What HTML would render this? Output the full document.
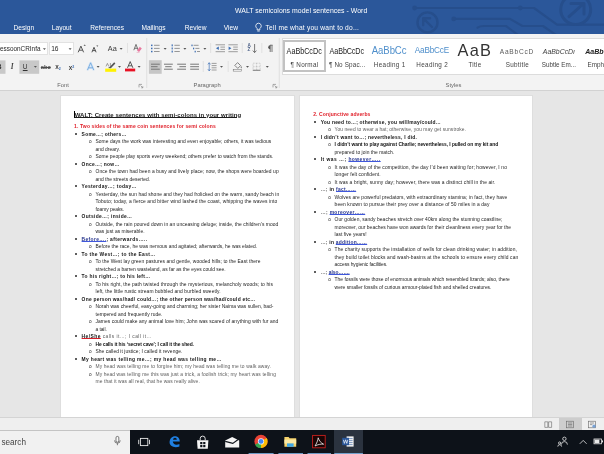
<!DOCTYPE html>
<html lang="en">
<head>
<meta charset="utf-8">
<title>WALT semicolons model sentences - Word</title>
<style>
html,body{margin:0;padding:0}
body{width:604px;height:454px;overflow:hidden;position:relative;background:#e6e6e6;font-family:"Liberation Sans",sans-serif;}
.abs{position:absolute}
#tb{position:absolute;left:0;top:0;width:604px;height:34px;background:#2b579a;overflow:hidden}
#tb span{position:absolute;color:#fff;white-space:nowrap;line-height:8px}
.tab{font-size:6.6px;top:23.600px;color:#fff!important}
#rb{position:absolute;left:0;top:34px;width:604px;height:56px;background:#f3f3f3;border-bottom:0.7px solid #d2d2d2;overflow:hidden}
#rb span{position:absolute;white-space:nowrap;color:#444;line-height:8px}
.gl{font-size:5.8px;color:#666!important;top:46.6px}
#doc{position:absolute;left:0;top:91px;width:604px;height:326px;background:#e6e6e6;overflow:hidden}
.pg{position:absolute;top:96px;height:321px;background:#fff;box-shadow:0 0 0 1px #dedede}
.l{position:absolute;white-space:nowrap;font-size:4.9px;line-height:8px;height:8px;color:#222}
.l.t{font-size:6px;font-weight:bold;color:#1c1c1c;text-decoration:underline;text-decoration-thickness:0.6px;text-underline-offset:0px}
.l.h{font-size:5px;font-weight:bold;color:#e0202a}
.l.b{font-weight:bold;color:#141414}
.l b{color:#111}
.lt{font-weight:normal;color:#5c5c5c}
.pf{color:#555}
u.bl{color:#26348c;text-decoration:underline;text-decoration-color:#3f57dc;text-decoration-thickness:0.7px;text-underline-offset:0.3px}
u.rd{text-decoration:underline;text-decoration-color:#d8202a;text-decoration-thickness:0.6px;text-underline-offset:0.4px}
.bu{position:absolute;width:2px;height:2px;border-radius:1px;background:#2a2a2a}
.ob{position:absolute;font-size:4.7px;line-height:8px;height:8px;color:#151515}
#sb{position:absolute;left:0;top:417px;width:604px;height:13px;background:#efefef;border-top:1px solid #d4d4d4;box-sizing:border-box}
#tk{position:absolute;left:0;top:430px;width:604px;height:24px;background:#0d1219;overflow:hidden}
#tk span{position:absolute;white-space:nowrap}
</style>
</head>
<body>
<div id="all" style="position:absolute;left:0;top:0;width:604px;height:454px;will-change:transform">

<!-- ============ TITLE BAR ============ -->
<div id="tb">
<svg class="abs" style="left:0;top:0" width="604" height="35" viewBox="0 0 604 35">
 <g fill="none" stroke="#264e8c" stroke-width="2.2" stroke-linecap="round" stroke-linejoin="round">
  <path d="M416 8H534L557 24.600H604"/>
  <circle cx="414.600" cy="8" r="1.300"/>
  <circle cx="520.300" cy="8" r="1.300" fill="#2b579a"/>
  <path d="M455.200 18.900H510L522.400 26H543L556 35"/>
  <circle cx="453.700" cy="18.900" r="1.300"/>
  <path d="M477.500 27.600Q480 26 484 26H506L518 35"/>
  <circle cx="427.500" cy="22.400" r="10" stroke-width="2.400"/>
  <path d="M432 27L423.800 18.800M423.200 25V18.200H430" stroke-width="2.400"/>
  <circle cx="575.700" cy="9.500" r="15" stroke-width="3"/>
  <path d="M569 16.600L582 5M571 3.600H584V14" stroke-width="3"/>
 </g>
</svg>
<span style="left:235px;top:7.2px;font-size:6.9px;letter-spacing:0.03px">WALT semicolons model sentences - Word</span>
<span class="tab" style="left:13.6px">Design</span>
<span class="tab" style="left:51.8px">Layout</span>
<span class="tab" style="left:90.3px">References</span>
<span class="tab" style="left:141.4px">Mailings</span>
<span class="tab" style="left:184.8px">Review</span>
<span class="tab" style="left:223.8px">View</span>
<svg class="abs" style="left:254px;top:22px" width="9" height="12" viewBox="0 0 9 12"><g fill="none" stroke="#fff" stroke-width="0.8"><path d="M4.5 1.2a2.8 2.8 0 0 0-1.4 5.2v1.4h2.8V6.4A2.8 2.8 0 0 0 4.5 1.2z"/><path d="M3.3 9h2.4"/></g></svg>
<span class="tab" style="left:265.6px;letter-spacing:0.22px">Tell me what you want to do...</span>
</div>

<!-- ============ RIBBON ============ -->
<div id="rb">
<!-- coordinates inside #rb are page-y minus 34.3 -->
<!-- font name / size boxes -->
<div class="abs" style="left:-1px;top:8px;width:49.200px;height:12.800px;background:#fff;border:0.600px solid #e2e2e2;box-sizing:border-box"></div>
<span style="left:0;top:11px;font-size:6.400px;color:#262626">essoonCRInfa</span>
<div class="abs" style="left:48.600px;top:8px;width:25.200px;height:12.800px;background:#fff;border:0.600px solid #e2e2e2;box-sizing:border-box"></div>
<span style="left:51.200px;top:11px;font-size:6.600px;color:#262626">16</span>
<svg class="abs" style="left:0;top:0" width="300" height="56" viewBox="0 34 300 56">
 <!-- highlighted buttons -->
 <rect x="-1" y="60.4" width="6.5" height="13.4" fill="#c8c8c8"/>
 <rect x="19.4" y="60.4" width="19.8" height="13.4" fill="#c8c8c8"/>
 <rect x="148.9" y="60.2" width="12.8" height="13.6" fill="#c6c6c6"/>
 <g fill="#555">
  <!-- dropdown arrows row1 -->
  <path d="M42.900 48.200h3l-1.500 1.700z"/>
  <path d="M68.600 48.200h3l-1.500 1.700z"/>
  <path d="M119.6 48h3l-1.500 1.700z"/>
  <path d="M163.6 48h3l-1.500 1.700z"/>
  <path d="M183.4 48h3l-1.500 1.700z"/>
  <path d="M203.4 48h3l-1.500 1.700z"/>
  <!-- row2 arrows -->
  <path d="M33.900 66h3l-1.500 1.700z"/>
  <path d="M96.6 66h3l-1.500 1.700z"/>
  <path d="M118 66h3l-1.500 1.700z"/>
  <path d="M137.6 66h3l-1.500 1.700z"/>
  <path d="M220 66h3l-1.500 1.700z"/>
  <path d="M246 66h3l-1.500 1.700z"/>
  <path d="M265.8 66h3l-1.500 1.700z"/>
 </g>
 <!-- separators -->
 <g stroke="#dadada" stroke-width="0.7">
  <path d="M127.5 43v10M210.6 43v10M242.3 43v10M261.8 43v10M203.3 61v11M228.2 61v11"/>
  <path d="M146.7 38v50M279.3 38v50" stroke="#d8d8d8"/>
 </g>
 <!-- grow / shrink font -->
 <g fill="none" stroke="#444" stroke-width="0.9">
  <path d="M78.200 52.300l2.700-6.200 2.700 6.200M79.200 50.200h3.400"/>
  <path d="M91.900 52.300l2.100-5 2.100 5M92.700 50.600h2.700"/>
 </g>
 <path d="M83.600 45.700l1.100-1.300 1.100 1.300z" fill="#444"/>
 <path d="M96.300 45.600l1 1.200 1-1.200z" fill="#444"/>
 <!-- bullets icon -->
 <g stroke="#6e6e6e" stroke-width="0.700" fill="none">
  <path d="M154 45.300h5.600M154 48.400h5.600M154 51.500h5.600"/>
  <path d="M174.4 45.3h5.4M174.4 48.4h5.4M174.4 51.5h5.4"/>
  <path d="M193.6 45.3h5M195.4 48.4h4M197 51.5h3"/>
 </g>
 <g fill="#3c6eb4">
  <rect x="151" y="44.6" width="1.5" height="1.5"/><rect x="151" y="47.7" width="1.5" height="1.5"/><rect x="151" y="50.8" width="1.5" height="1.5"/>
  <rect x="171.6" y="44.4" width="1.2" height="1.9"/><rect x="171.6" y="47.5" width="1.2" height="1.9"/><rect x="171.6" y="50.6" width="1.2" height="1.9"/>
  <rect x="191.4" y="44.6" width="1.2" height="1.6"/><rect x="193" y="47.7" width="1.2" height="1.6"/><rect x="194.6" y="50.8" width="1.2" height="1.6"/>
 </g>
 <!-- decrease / increase indent -->
 <g stroke="#707070" stroke-width="0.650" fill="none">
  <path d="M215.600 44.800h9.400M220.400 47.100h4.600M220.400 49.400h4.600M215.600 51.700h9.400"/>
  <path d="M228.400 44.800h9.400M233.200 47.100h4.600M233.200 49.400h4.600M228.400 51.700h9.400"/>
 </g>
 <path d="M218.800 46.600v3.400l-2.800-1.700z" fill="#3c6eb4"/>
 <path d="M228.600 46.600v3.400l2.800-1.700z" fill="#3c6eb4"/>
 <!-- sort -->
 <g stroke="#555" stroke-width="0.800" fill="none"><path d="M254.600 44v8.400M252.800 50.600l1.800 2 1.800-2"/></g>
 <!-- pilcrow -->
 <g stroke="#555" stroke-width="0.800" fill="none"><path d="M270.200 45.200v6.800M272 45.200v6.800M272.600 45.200h-2.600"/></g>
 <path d="M270.200 45.200a2 2 0 0 0 0 4z" fill="#555"/>
 <!-- row 2: text effects A -->
 <path d="M87.400 70.200l3.200-7.400 3.200 7.400M88.600 67.800h4" fill="none" stroke="#d3e4f7" stroke-width="2.200" stroke-linejoin="round"/>
 <path d="M87.400 70.200l3.200-7.400 3.200 7.400M88.600 67.800h4" fill="none" stroke="#5b9bd5" stroke-width="0.700"/>
 <!-- highlighter -->
 <rect x="105.200" y="68.600" width="11" height="3.200" fill="#fff200"/>
 <path d="M108 68l1.600-1 4.600-4.800 1.200 1.200-4.600 4.800z" fill="#555"/><path d="M106 66.400l1.400-3 1.400 3M110.400 63v3.400" stroke="#666" stroke-width="0.600" fill="none"/>
 <!-- font colour -->
 <rect x="125" y="68.600" width="10.200" height="2.800" fill="#e81123"/>
 <path d="M127.500 67.800l2.700-6.200 2.700 6.200M128.500 65.800h3.400" fill="none" stroke="#444" stroke-width="0.900"/>
 <!-- alignment -->
 <g stroke="#555" stroke-width="0.8" fill="none">
  <g stroke="#777" stroke-width="1"><path d="M151 64.200h8.800M151 66.700h6.600M151 69.200h8.800"/>
  <path d="M164 64.200h8.800M165.200 66.700h6.400M164 69.200h8.800"/>
  <path d="M177.200 64.200h8.800M179.400 66.700h6.600M177.200 69.200h8.800"/>
  <path d="M190.200 64.200h8.800M190.200 66.700h8.800M190.200 69.200h8.800"/></g>
  <!-- line spacing -->
  <path d="M211.600 63.400h5M211.600 65.600h5M211.600 67.800h5M211.600 70h5" stroke="#707070" stroke-width="0.650"/>
 </g>
 <path d="M209.200 62.800v8M207.900 64.400l1.300-1.700 1.300 1.700M207.900 69.200l1.300 1.700 1.300-1.700" stroke="#3c6eb4" stroke-width="0.700" fill="none"/>
 <!-- shading bucket -->
 <rect x="233.200" y="69.400" width="8.400" height="1.700" fill="#fff" stroke="#666" stroke-width="0.500"/>
 <path d="M234.800 65.400l2.800-2.800 3 3-2.800 2.800z" fill="#f3f3f3" stroke="#555" stroke-width="0.700"/>
 <path d="M241.200 66q1 1.600 0 2.400-1-0.800 0-2.400z" fill="#555"/>
 <!-- borders -->
 <g stroke="#a0a0a0" stroke-width="0.500" fill="none" stroke-dasharray="0.800 0.700"><rect x="253" y="63.200" width="7.200" height="7"/><path d="M256.600 63.200v7M253 66.700h7.200"/></g>
 <path d="M252.800 70.300h7.600" stroke="#555" stroke-width="0.700"/>
 <!-- clear formatting -->
 <path d="M133.800 50.200l2.200-5.800 2.200 5.800M134.600 48.300h2.800" fill="none" stroke="#555" stroke-width="0.800"/>
 <path d="M137 50.400l2.800-3.600 2 1.600-2.800 3.600z" fill="#e8799f"/>
 <path d="M136.600 52.400h3" stroke="#e8a0b8" stroke-width="0.600"/>
 <!-- dialog launchers -->
 <g stroke="#777" stroke-width="0.6" fill="none">
  <path d="M139 87.4v-3h3M140.6 85.6l2 2M142.8 86.2v1.6h-1.6"/>
  <path d="M273 87.4v-3h3M274.6 85.6l2 2M276.8 86.2v1.6h-1.6"/>
 </g>
</svg>
<span style="left:107.800px;top:10.600px;font-size:7.300px;color:#3a3a3a">Aa</span>
<span style="left:247.600px;top:9.200px;font-size:4.600px;font-weight:bold;color:#4a5f86;line-height:5px">A</span>
<span style="left:247.600px;top:13.400px;font-size:4.600px;font-weight:bold;color:#4a5f86;line-height:5px">Z</span>
<span style="left:-3.400px;top:28.600px;font-size:7px;font-weight:bold;color:#333">B</span>
<span style="left:10.800px;top:28.600px;font-size:7.200px;font-style:italic;font-weight:bold;font-family:'Liberation Serif',serif;color:#444">I</span>
<span style="left:22.800px;top:28.600px;font-size:6.600px;text-decoration:underline;color:#333">U</span>
<span style="left:40.800px;top:28.600px;font-size:5.800px;font-weight:bold;text-decoration:line-through;text-decoration-thickness:0.500px;color:#4a4a4a">abc</span>
<span style="left:55.200px;top:28.600px;font-size:6.4px;font-weight:bold;color:#444">x<span style="position:static;font-size:3.6px;vertical-align:-1.4px;color:#3c6eb4">2</span></span>
<span style="left:68.700px;top:28.600px;font-size:6.4px;font-weight:bold;color:#444">x<span style="position:static;font-size:3.6px;vertical-align:2.4px;color:#3c6eb4">2</span></span>
<span class="gl" style="left:57.3px">Font</span>
<span class="gl" style="left:193.6px">Paragraph</span>
<span class="gl" style="left:445.6px">Styles</span>

<!-- styles gallery -->
<div class="abs" style="left:282px;top:4px;width:330px;height:37px;background:#fff;border:1px solid #dcdcdc;box-sizing:border-box"></div>
<div class="abs" style="left:283px;top:6px;width:43px;height:32px;border:2px solid #c2c2c2;box-sizing:border-box"></div>
<span style="left:286.600px;top:13.600px;font-size:7.200px;color:#222;transform:scaleY(1.16);transform-origin:0 72%">AaBbCcDc</span>
<span style="left:290.6px;top:27.4px;font-size:6.3px;color:#444;letter-spacing:0.3px">¶ Normal</span>
<span style="left:329.600px;top:13.600px;font-size:7.200px;letter-spacing:-0.100px;color:#222;transform:scaleY(1.16);transform-origin:0 72%">AaBbCcDc</span>
<span style="left:328.9px;top:27.4px;font-size:6.3px;color:#444;letter-spacing:0.18px">¶ No Spac...</span>
<span style="left:371.800px;top:12.800px;font-size:9.600px;color:#4f8fcb;letter-spacing:-0.100px;transform:scaleY(1.16);transform-origin:0 72%">AaBbC<span style="position:static;color:#4f8fcb">c</span></span>
<span style="left:373.800px;top:27.400px;font-size:6.300px;color:#444;letter-spacing:0.350px">Heading 1</span>
<span style="left:414.800px;top:13.400px;font-size:8.200px;letter-spacing:-0.180px;color:#4f8fcb;transform:scaleY(1.16);transform-origin:0 72%">AaBbCcE</span>
<span style="left:416.300px;top:27.400px;font-size:6.300px;color:#444;letter-spacing:0.350px">Heading 2</span>
<span style="left:457.600px;top:12px;font-size:16.400px;color:#333;letter-spacing:1.200px">AaB</span>
<span style="left:468.500px;top:27.400px;font-size:6.300px;color:#444;letter-spacing:0.250px">Title</span>
<span style="left:499.8px;top:13.6px;font-size:6.6px;color:#5a5a5a;letter-spacing:0.75px">AaBbCcD</span>
<span style="left:505.700px;top:27.400px;font-size:6.300px;color:#444;letter-spacing:0.300px">Subtitle</span>
<span style="left:542.8px;top:13.6px;font-size:6.9px;color:#404040;font-style:italic">AaBbCcDı</span>
<span style="left:541.7px;top:27.4px;font-size:6.3px;color:#444">Subtle Em...</span>
<span style="left:585.3px;top:13.6px;font-size:7px;color:#222;font-style:italic;font-weight:bold">AaBbC</span>
<span style="left:587.5px;top:27.4px;font-size:6.3px;color:#444">Emphasis</span>
</div>

<!-- ============ DOCUMENT ============ -->
<div id="doc"></div>
<div class="pg" style="left:60.5px;width:233.3px"></div>
<div class="pg" style="left:299.6px;width:232.9px"></div>
<div class="abs" style="left:74.1px;top:110.6px;width:0.7px;height:7.6px;background:#000"></div>
<span class="l t" style="left:74.7px;top:111.00px;letter-spacing:0.071px">WALT: Create sentences with semi-colons in your writing</span>
<span class="l h" style="left:74.1px;top:122.00px;letter-spacing:0.133px">1. Two sides of the same coin sentences for semi colons</span>
<i class="bu" style="left:75px;top:133px"></i><span class="l b" style="left:81.6px;top:131.00px;letter-spacing:0.290px">Some…; others…</span>
<span class="ob" style="left:89.1px;top:138px">o</span><span class="l" style="left:95.5px;top:138.00px;letter-spacing:0.067px">Some days the work was interesting and even enjoyable; others, it was tedious</span>
<span class="l" style="left:95.5px;top:146.00px;letter-spacing:0.010px">and dreary.</span>
<span class="ob" style="left:89.1px;top:153px">o</span><span class="l" style="left:95.5px;top:153.00px;letter-spacing:0.043px">Some people play sports every weekend; others prefer to watch from the stands.</span>
<i class="bu" style="left:75px;top:163px"></i><span class="l b" style="left:81.6px;top:161.00px;letter-spacing:0.293px">Once…; now…</span>
<span class="ob" style="left:89.1px;top:168px">o</span><span class="l" style="left:95.5px;top:168.00px;letter-spacing:0.076px">Once the town had been a busy and lively place; now, the shops were boarded up</span>
<span class="l" style="left:95.5px;top:176.00px;letter-spacing:0.024px">and the streets deserted.</span>
<i class="bu" style="left:75px;top:185px"></i><span class="l b" style="left:81.6px;top:183.00px;letter-spacing:0.342px">Yesterday…; today…</span>
<span class="ob" style="left:89.1px;top:191px">o</span><span class="l" style="left:95.5px;top:191.00px;letter-spacing:0.083px">Yesterday, the sun had shone and they had frolicked on the warm, sandy beach in</span>
<span class="l" style="left:95.5px;top:198.00px;letter-spacing:0.115px">Tobuto; today, a fierce and bitter wind lashed the coast, whipping the waves into</span>
<span class="l" style="left:95.5px;top:206.00px;letter-spacing:-0.049px">foamy peaks.</span>
<i class="bu" style="left:75px;top:215px"></i><span class="l b" style="left:81.6px;top:213.00px;letter-spacing:0.329px">Outside…; inside…</span>
<span class="ob" style="left:89.1px;top:221px">o</span><span class="l" style="left:95.5px;top:221.00px;letter-spacing:0.063px">Outside, the rain poured down in an unceasing deluge; inside, the children’s mood</span>
<span class="l" style="left:95.5px;top:228.00px;letter-spacing:0.045px">was just as miserable.</span>
<i class="bu" style="left:75px;top:238px"></i><span class="l b" style="left:81.6px;top:236.00px;letter-spacing:0.379px"><u class="bl">Before….</u>; afterwards…..</span>
<span class="ob" style="left:89.1px;top:243px">o</span><span class="l" style="left:95.5px;top:243.00px;letter-spacing:0.043px">Before the race, he was nervous and agitated; afterwards, he was elated.</span>
<i class="bu" style="left:75px;top:253px"></i><span class="l b" style="left:81.6px;top:251.00px;letter-spacing:0.337px">To the West…; to the East…</span>
<span class="ob" style="left:89.1px;top:258px">o</span><span class="l" style="left:95.5px;top:258.00px;letter-spacing:0.071px">To the West lay green pastures and gentle, wooded hills; to the East there</span>
<span class="l" style="left:95.5px;top:266.00px;letter-spacing:0.036px">stretched a barren wasteland, as far as the eyes could see.</span>
<i class="bu" style="left:75px;top:275px"></i><span class="l b" style="left:81.6px;top:273.00px;letter-spacing:0.298px">To his right…; to his left…</span>
<span class="ob" style="left:89.1px;top:281px">o</span><span class="l" style="left:95.5px;top:281.00px;letter-spacing:0.106px">To his right, the path twisted through the mysterious, melancholy woods; to his</span>
<span class="l" style="left:95.5px;top:288.00px;letter-spacing:0.087px">left, the little rustic stream bubbled and burbled sweetly.</span>
<i class="bu" style="left:75px;top:298px"></i><span class="l b" style="left:81.6px;top:296.00px;letter-spacing:0.245px">One person was/had/ could…; the other person was/had/could etc…</span>
<span class="ob" style="left:89.1px;top:303px">o</span><span class="l" style="left:95.5px;top:303.00px;letter-spacing:0.040px">Norah was cheerful, easy-going and charming; her sister Naima was sullen, bad-</span>
<span class="l" style="left:95.5px;top:311.00px;letter-spacing:0.051px">tempered and frequently rude.</span>
<span class="ob" style="left:89.1px;top:318px">o</span><span class="l" style="left:95.5px;top:318.00px;letter-spacing:0.079px">James could make any animal love him; John was scared of anything with fur and</span>
<span class="l" style="left:95.5px;top:326.00px;letter-spacing:-0.072px">a tail.</span>
<i class="bu" style="left:75px;top:335px"></i><span class="l b" style="left:81.6px;top:333.00px;letter-spacing:0.439px"><u class="rd">He/She</u> <span class="lt">calls it…; I call it…</span></span>
<span class="ob" style="left:89.1px;top:341px">o</span><span class="l" style="left:95.5px;top:341.00px;letter-spacing:-0.093px"><b>He calls it his ‘secret cave’; I call it the shed.</b></span>
<span class="ob" style="left:89.1px;top:348px">o</span><span class="l" style="left:95.5px;top:348.00px;letter-spacing:0.061px">She called it justice; I called it revenge.</span>
<i class="bu" style="left:75px;top:358px"></i><span class="l b" style="left:81.6px;top:356.00px;letter-spacing:0.363px">My heart was telling me…; my head was telling me…</span>
<span class="ob" style="left:89.1px;top:363px">o</span><span class="l" style="left:95.5px;top:363.00px;letter-spacing:0.127px"><span class="lt">My head was telling me to forgive him; my head was telling me to walk away.</span></span>
<span class="ob" style="left:89.1px;top:371px">o</span><span class="l" style="left:95.5px;top:371.00px;letter-spacing:0.118px"><span class="lt">My head was telling me this was just a trick, a foolish trick; my heart was telling</span></span>
<span class="l" style="left:95.5px;top:378.00px;letter-spacing:0.098px"><span class="lt">me that it was all real, that he was really alive.</span></span>
<span class="l h" style="left:313.2px;top:110.00px;letter-spacing:0.116px">2. Conjunctive adverbs</span>
<i class="bu" style="left:314px;top:121px"></i><span class="l b" style="left:320.7px;top:119.00px;letter-spacing:0.245px">You need to…; otherwise, you will/may/could…</span>
<span class="ob" style="left:328.2px;top:126px">o</span><span class="l" style="left:334.6px;top:126.00px;letter-spacing:0.078px"><span class="lt">You need to wear a hat; otherwise, you may get sunstroke.</span></span>
<i class="bu" style="left:314px;top:136px"></i><span class="l b" style="left:320.7px;top:134.00px;letter-spacing:0.258px">I didn’t want to…; nevertheless, I did.</span>
<span class="ob" style="left:328.2px;top:141px">o</span><span class="l" style="left:334.6px;top:141.00px;letter-spacing:-0.056px"><b>I didn’t want to play against Charlie; nevertheless, I pulled on my kit and</b></span>
<span class="l" style="left:334.6px;top:149.00px;letter-spacing:0.052px">prepared to join the match.</span>
<i class="bu" style="left:314px;top:158px"></i><span class="l b" style="left:320.7px;top:156.00px;letter-spacing:0.486px">It was …; <u class="bl">however…..</u></span>
<span class="ob" style="left:328.2px;top:164px">o</span><span class="l" style="left:334.6px;top:164.00px;letter-spacing:0.119px">It was the day of the competition, the day I’d been waiting for; however, I no</span>
<span class="l" style="left:334.6px;top:171.00px;letter-spacing:0.093px">longer felt confident.</span>
<span class="ob" style="left:328.2px;top:179px">o</span><span class="l" style="left:334.6px;top:179.00px;letter-spacing:0.119px">It was a bright, sunny day; however, there was a distinct chill in the air.</span>
<i class="bu" style="left:314px;top:188px"></i><span class="l b" style="left:320.7px;top:186.00px;letter-spacing:0.284px"><span class="pf">…;</span> in <u class="bl">fact……</u></span>
<span class="ob" style="left:328.2px;top:194px">o</span><span class="l" style="left:334.6px;top:194.00px;letter-spacing:0.092px">Wolves are powerful predators, with extraordinary stamina; in fact, they have</span>
<span class="l" style="left:334.6px;top:201.00px;letter-spacing:0.103px">been known to pursue their prey over a distance of 50 miles in a day</span>
<i class="bu" style="left:314px;top:211px"></i><span class="l b" style="left:320.7px;top:209.00px;letter-spacing:0.349px"><span class="pf">…;</span> <u class="bl">moreover……</u></span>
<span class="ob" style="left:328.2px;top:216px">o</span><span class="l" style="left:334.6px;top:216.00px;letter-spacing:0.062px">Our golden, sandy beaches stretch over 40km along the stunning coastline;</span>
<span class="l" style="left:334.6px;top:224.00px;letter-spacing:0.052px">moreover, our beaches have won awards for their cleanliness every year for the</span>
<span class="l" style="left:334.6px;top:231.00px;letter-spacing:0.046px">last five years!</span>
<i class="bu" style="left:314px;top:241px"></i><span class="l b" style="left:320.7px;top:239.00px;letter-spacing:0.255px"><span class="pf">…;</span> in <u class="bl">addition……</u></span>
<span class="ob" style="left:328.2px;top:246px">o</span><span class="l" style="left:334.6px;top:246.00px;letter-spacing:0.112px">The charity supports the installation of wells for clean drinking water; in addition,</span>
<span class="l" style="left:334.6px;top:254.00px;letter-spacing:0.131px">they build toilet blocks and wash-basins at the schools to ensure every child can</span>
<span class="l" style="left:334.6px;top:261.00px;letter-spacing:-0.068px">access hygienic facilities.</span>
<i class="bu" style="left:314px;top:271px"></i><span class="l b" style="left:320.7px;top:269.00px;letter-spacing:0.017px"><span class="pf">…;</span> <u class="bl">also…….</u></span>
<span class="ob" style="left:328.2px;top:276px">o</span><span class="l" style="left:334.6px;top:276.00px;letter-spacing:0.009px">The fossils were those of enormous animals which resembled lizards; also, there</span>
<span class="l" style="left:334.6px;top:284.00px;letter-spacing:0.019px">were smaller fossils of curious armour-plated fish and shelled creatures.</span>

<!-- ============ STATUS BAR ============ -->
<div id="sb">
<div class="abs" style="left:559.200px;top:0;width:22.400px;height:12px;background:#cdcdcd"></div>
<svg class="abs" style="left:540px;top:0" width="64" height="13" viewBox="540 417 64 13">
 <g fill="none" stroke="#666" stroke-width="0.6">
  <path d="M544.8 420.8h3v5.6h-3zM548.6 420.8h3v5.6h-3z"/>
  <rect x="566.6" y="420.2" width="7" height="6.6"/>
  <path d="M568 422h4.2M568 423.5h4.2M568 425h4.2"/>
  <rect x="588.6" y="420.2" width="7" height="6.6"/>
  <path d="M590 422h4M590 423.6h2.4"/>
 </g>
 <circle cx="594" cy="425.2" r="1.6" fill="#5a8ed0" opacity=".8"/>
</svg>
</div>

<!-- ============ TASKBAR ============ -->
<div id="tk">
<div class="abs" style="left:0;top:0;width:130.300px;height:24px;background:#f1f1f1;border-top:1px solid #c4c4c4;box-sizing:border-box"></div>
<span style="left:1.400px;top:9px;font-size:8.200px;line-height:8px;color:#444">search</span>
<div class="abs" style="left:334.3px;top:0;width:28.6px;height:24px;background:#2b333f"></div>
<svg class="abs" style="left:0;top:0" width="604" height="24" viewBox="0 430 604 24">
 <!-- mic -->
 <g fill="none" stroke="#444" stroke-width="0.7"><rect x="116" y="436.4" width="2.8" height="5.8" rx="1.4" fill="#fafafa"/><path d="M114.6 440.4a2.8 2.8 0 0 0 5.6 0M117.4 443.4v1.8"/></g>
 <!-- task view -->
 <g fill="none" stroke="#e8e8e8" stroke-width="0.900"><rect x="140.400" y="438.400" width="7.400" height="7.200"/><path d="M138.700 439.800v4.400M149.500 439.800v4.400"/></g>
 <!-- edge -->
 <path d="M169.6 442.6c0-4 2.4-6.4 5.4-6.4 3 0 4.8 2.2 4.8 5.4h-7c.2 2 1.6 3.2 3.6 3.2 1.200 0 2.200-.3 3-.8v2.400c-1 .5-2.200.8-3.600.8-3.800 0-6.200-2-6.200-4.600zm3.400-2.800h3.800c0-1.200-.7-2-1.800-2s-1.800.8-2 2z" fill="#1f7fe0"/>
 <!-- store -->
 <path d="M197 440.200h11.400l-.6 8.600h-10.200z" fill="#f4f4f4"/>
 <path d="M200.200 440.200v-1.600a2.500 2.500 0 0 1 5 0v1.600" fill="none" stroke="#f4f4f4" stroke-width="0.900"/>
 <g fill="#0d1219"><rect x="200.200" y="442" width="2.200" height="2.200"/><rect x="203.200" y="442" width="2.200" height="2.200"/><rect x="200.200" y="445" width="2.200" height="2.200"/><rect x="203.200" y="445" width="2.200" height="2.200"/></g>
 <!-- mail -->
 <path d="M225.200 440.600l7-3.600 7 3.600v6.800h-14z" fill="#f4f4f4"/>
 <path d="M225.200 441.400l7.600 2 6.400-4.600" fill="none" stroke="#0d1219" stroke-width="1.100"/>
 <!-- chrome -->
 <circle cx="261" cy="441.400" r="6.600" fill="#e94335"/>
 <path d="M261 441.400L255.300 444.700A6.600 6.600 0 0 0 261 448z" fill="#34a853"/>
 <path d="M261 441.400l-5.700 3.300a6.600 6.600 0 0 0 5.700 3.300 6.600 6.600 0 0 0 1-.1z" fill="#34a853"/>
 <path d="M261 441.400v6.600a6.600 6.600 0 0 0 5.700-9.900z" fill="#fbbc05"/>
 <circle cx="261" cy="441.400" r="3.100" fill="#f4f4f4"/>
 <circle cx="261" cy="441.400" r="2.400" fill="#4285f4"/>
 <!-- explorer -->
 <path d="M284.400 437h4.200l1 1.200h6.600v8.600h-11.800z" fill="#f6d36b"/>
 <rect x="284.400" y="439.600" width="11.800" height="4" fill="#fbe9a6"/>
 <rect x="287" y="443.400" width="6.600" height="3.400" fill="#3fa7e6"/>
 <!-- acrobat -->
 <rect x="312.600" y="435.400" width="12.600" height="12.400" fill="#1a0505" stroke="#c8201e" stroke-width="0.9"/>
 <path d="M315 446c1.600-2.600 3-5.600 3.200-8.200.9 3 2.800 5.200 5.400 6.400-2.800-.4-6 .4-8.600 1.800z" fill="none" stroke="#f4f4f4" stroke-width="0.8"/>
 <!-- word -->
 <rect x="346.600" y="436.400" width="7" height="10.200" fill="#f4f4f4"/>
 <path d="M348.600 438.600h4M348.600 440.600h4M348.600 442.600h4M348.600 444.600h4" stroke="#2b579a" stroke-width="0.6"/>
 <rect x="342.200" y="437.800" width="6.800" height="7.400" fill="#2b579a"/>
 <path d="M343.400 439.800l1 3.600 1.200-3.600 1.200 3.600 1-3.600" fill="none" stroke="#fff" stroke-width="0.7"/>
 <!-- running indicators -->
 <g fill="#85bdf0"><rect x="248.600" y="453.200" width="25" height="1"/><rect x="278.400" y="453.200" width="24.600" height="1"/><rect x="307.500" y="453.200" width="23.500" height="1"/><rect x="334.300" y="453.200" width="28.600" height="1"/></g>
 <!-- tray -->
 <g fill="none" stroke="#e8e8e8" stroke-width="0.8">
  <circle cx="564.400" cy="438.800" r="1.700"/><path d="M561.400 444.600a3 3 0 0 1 6 0"/>
  <circle cx="559.600" cy="443" r="1.100"/><path d="M557.800 446.600a1.900 1.900 0 0 1 3.800 0"/>
  <path d="M579.800 443.800l3.400-3.400 3.400 3.400"/>
  <rect x="594" y="439" width="7.600" height="4.800"/>
 </g>
 <rect x="594.600" y="439.600" width="4.800" height="3.600" fill="#e8e8e8"/>
 <rect x="602" y="440.400" width="1" height="2" fill="#e8e8e8"/>
</svg>
</div>
</div>
</body>
</html>
